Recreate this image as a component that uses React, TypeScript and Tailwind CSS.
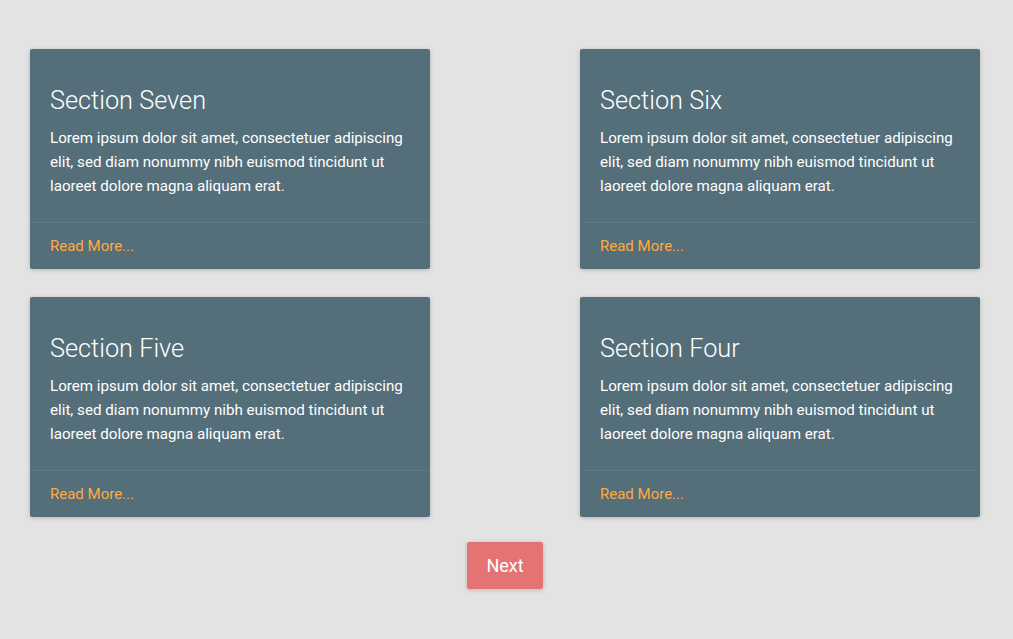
const sections = [
  { title: 'Section Seven' },
  { title: 'Section Six' },
  { title: 'Section Five' },
  { title: 'Section Four' },
];

const body =
  'Lorem ipsum dolor sit amet, consectetuer adipiscing elit, sed diam nonummy nibh euismod tincidunt ut laoreet dolore magna aliquam erat.';

export default function App() {
  return (
    <div
      className="min-h-screen bg-[#e3e3e3] pt-[49px]"
      style={{ fontFamily: 'Roboto, "Noto Sans", sans-serif' }}
    >
      <div className="mx-[30px] w-[950px]">
        <div className="grid grid-cols-[400px_400px] justify-between gap-y-[28px]">
          {sections.map((s) => (
            <div
              key={s.title}
              className="flex h-[220px] flex-col rounded-[2px] bg-[#546e7a] shadow-[0_1px_4px_0_rgba(0,0,0,0.12),0_1px_6px_0_rgba(0,0,0,0.08)]"
            >
              <div className="px-[20px] pt-[36px] pb-[24px]">
                <h2 className="mb-[9px] text-[25.3px] leading-[32px] font-light text-white">
                  {s.title}
                </h2>
                <p className="text-[15.15px] leading-[24px] text-white">{body}</p>
              </div>
              <div className="border-t border-[#5f7884] px-[20px] py-[11px]">
                <a href="#" className="text-[15px] leading-[24px] text-[#ffab40]">
                  Read More...
                </a>
              </div>
            </div>
          ))}
        </div>

        <div className="mt-[25px] flex justify-center">
          <button className="h-[47px] w-[76px] rounded-[2px] bg-[#e57373] text-[18px] text-white shadow-[0_1px_4px_0_rgba(0,0,0,0.12),0_1px_6px_0_rgba(0,0,0,0.08)]">
            Next
          </button>
        </div>
      </div>
    </div>
  );
}
